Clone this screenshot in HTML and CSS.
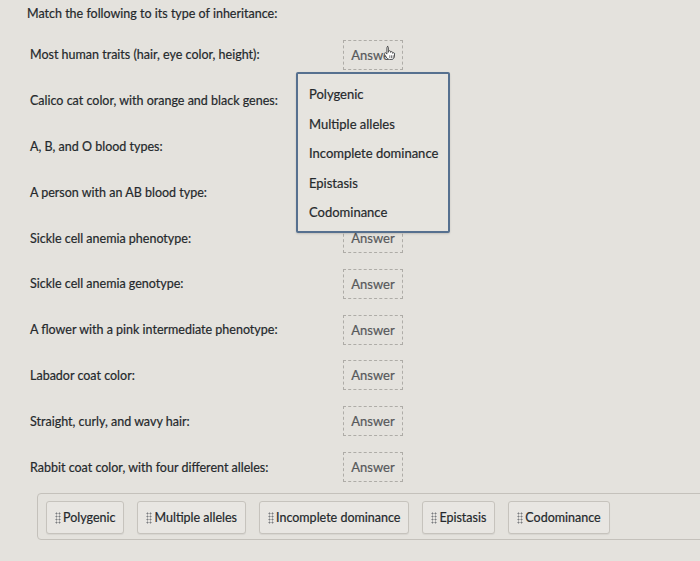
FILE: index.html
```html
<!DOCTYPE html>
<html>
<head>
<meta charset="utf-8">
<link rel="stylesheet" href="styles.css">
</head>
<body>
<div class="page">
  <div class="title">Match the following to its type of inheritance:</div>
  <div class="rows">
    <div class="row"><span class="label">Most human traits (hair, eye color, height):</span><span class="answer">Answer<svg class="cursor" viewBox="0 0 14 16" width="13" height="15"><path d="M4.5 1.5c.8 0 1.3.6 1.3 1.3v5l.1-.9c.2-.6.7-.9 1.3-.8.6.1 1 .6 1 1.2v.6c.1-.6.6-1 1.2-.9.6.1 1 .6 1 1.2v.7c.2-.5.6-.8 1.1-.7.6.1.9.6.9 1.1v2.6c0 2-1.4 3.6-3.6 3.6H7c-1.2 0-2.2-.6-2.9-1.6L1.6 10c-.4-.6-.2-1.3.3-1.6.5-.3 1.1-.2 1.5.3l.8 1V2.8c0-.7.5-1.3 1.3-1.3z" fill="#fbfbfb" stroke="#4a4a4a" stroke-width="1"/><path d="M7.3 11v3M9.2 11v3M11 11v3" stroke="#4a4a4a" stroke-width=".8"/></svg></span></div>
    <div class="row"><span class="label">Calico cat color, with orange and black genes:</span><span class="answer">Answer</span></div>
    <div class="row"><span class="label">A, B, and O blood types:</span><span class="answer">Answer</span></div>
    <div class="row"><span class="label">A person with an AB blood type:</span><span class="answer">Answer</span></div>
    <div class="row"><span class="label">Sickle cell anemia phenotype:</span><span class="answer">Answer</span></div>
    <div class="row"><span class="label">Sickle cell anemia genotype:</span><span class="answer">Answer</span></div>
    <div class="row"><span class="label">A flower with a pink intermediate phenotype:</span><span class="answer">Answer</span></div>
    <div class="row"><span class="label">Labador coat color:</span><span class="answer">Answer</span></div>
    <div class="row"><span class="label">Straight, curly, and wavy hair:</span><span class="answer">Answer</span></div>
    <div class="row"><span class="label">Rabbit coat color, with four different alleles:</span><span class="answer">Answer</span></div>
  </div>
  <div class="menu">
    <div class="item">Polygenic</div>
    <div class="item">Multiple alleles</div>
    <div class="item">Incomplete dominance</div>
    <div class="item">Epistasis</div>
    <div class="item">Codominance</div>
  </div>
  <div class="bank">
    <div class="chip"><span class="grip"></span>Polygenic</div>
    <div class="chip"><span class="grip"></span>Multiple alleles</div>
    <div class="chip"><span class="grip"></span>Incomplete dominance</div>
    <div class="chip"><span class="grip"></span>Epistasis</div>
    <div class="chip"><span class="grip"></span>Codominance</div>
  </div>
</div>
</body>
</html>
```
FILE: styles.css
```css
html, body {
  margin: 0;
  padding: 0;
}
body {
  background: #e4e2dd;
  font-family: Lato, "Noto Sans", sans-serif;
  font-size: 12.5px;
  color: #25292c;
  -webkit-text-stroke: 0.2px;
  width: 700px;
  height: 561px;
  overflow: hidden;
}
.page {
  position: relative;
  height: 561px;
}
.title {
  padding: 5px 0 0 27px;
  height: 27px;
  line-height: 18px;
}
.rows {
  display: flex;
  flex-direction: column;
}
.row {
  height: 45.8px;
  display: flex;
  align-items: center;
  padding-left: 30px;
}
.label {
  width: 313px;
}
.answer {
  position: relative;
  width: 58px;
  height: 28px;
  border: 1px dashed #aeaca7;
  display: flex;
  align-items: center;
  justify-content: center;
  color: #57595b;
  font-size: 13px;
  box-sizing: content-box;
}
.cursor {
  position: absolute;
  right: 6px;
  top: 4px;
  -webkit-text-stroke: 0;
}
.menu {
  position: absolute;
  left: 296px;
  top: 72px;
  width: 150px;
  height: 151px;
  border: 2px solid #56708f;
  border-radius: 2px;
  background: #e6e4df;
  padding-top: 6px;
  box-sizing: content-box;
  box-shadow: 0 1px 2px rgba(0,0,0,0.15);
  font-size: 13px;
}
.item {
  height: 29.6px;
  line-height: 29.6px;
  padding-left: 11px;
  color: #25292c;
}
.bank {
  position: absolute;
  left: 37px;
  top: 493px;
  width: 700px;
  height: 47px;
  border: 1px solid #c4c1bb;
  border-radius: 4px;
  display: flex;
  gap: 13px;
  padding: 7px 8px;
  box-sizing: border-box;
  align-items: flex-start;
}
.chip {
  height: 33px;
  border: 1px solid #c6c3bd;
  border-radius: 3px;
  background: #e8e6e2;
  display: flex;
  align-items: center;
  padding: 0 8px 0 8px;
  box-sizing: border-box;
  box-shadow: 0 1px 1px rgba(0,0,0,0.06);
  white-space: nowrap;
}
.grip {
  width: 6px;
  height: 12px;
  margin-right: 2px;
  background-image: radial-gradient(circle, #7a7c7f 0.9px, transparent 1.1px);
  background-size: 3px 3px;
}
```
